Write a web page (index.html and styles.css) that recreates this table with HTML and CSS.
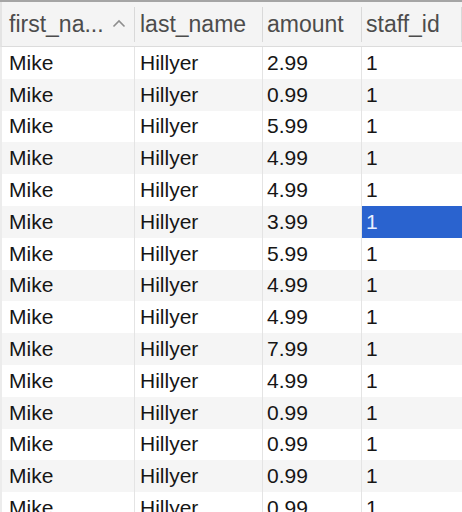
FILE: index.html
```html
<!DOCTYPE html>
<html>
<head>
<meta charset="utf-8">
<link rel="stylesheet" href="styles.css">
</head>
<body>
<div class="grid">
  <div class="topbar"></div>
  <div class="head">
    <div class="hc c1"><span class="htext">first_na...</span>
      <svg class="chev" width="14" height="9" viewBox="0 0 14 9"><path d="M1.5 7.5 L7 2 L12.5 7.5" fill="none" stroke="#8e8e8e" stroke-width="1.6"/></svg>
    </div>
    <div class="hc c2"><span class="htext">last_name</span></div>
    <div class="hc c3"><span class="htext">amount</span></div>
    <div class="hc c4"><span class="htext">staff_id</span></div>
  </div>
  <div class="body">
    <div class="row"><div class="cell c1">Mike</div><div class="cell c2">Hillyer</div><div class="cell c3">2.99</div><div class="cell c4">1</div></div>
    <div class="row alt"><div class="cell c1">Mike</div><div class="cell c2">Hillyer</div><div class="cell c3">0.99</div><div class="cell c4">1</div></div>
    <div class="row"><div class="cell c1">Mike</div><div class="cell c2">Hillyer</div><div class="cell c3">5.99</div><div class="cell c4">1</div></div>
    <div class="row alt"><div class="cell c1">Mike</div><div class="cell c2">Hillyer</div><div class="cell c3">4.99</div><div class="cell c4">1</div></div>
    <div class="row"><div class="cell c1">Mike</div><div class="cell c2">Hillyer</div><div class="cell c3">4.99</div><div class="cell c4">1</div></div>
    <div class="row alt"><div class="cell c1">Mike</div><div class="cell c2">Hillyer</div><div class="cell c3">3.99</div><div class="cell c4 sel">1</div></div>
    <div class="row"><div class="cell c1">Mike</div><div class="cell c2">Hillyer</div><div class="cell c3">5.99</div><div class="cell c4">1</div></div>
    <div class="row alt"><div class="cell c1">Mike</div><div class="cell c2">Hillyer</div><div class="cell c3">4.99</div><div class="cell c4">1</div></div>
    <div class="row"><div class="cell c1">Mike</div><div class="cell c2">Hillyer</div><div class="cell c3">4.99</div><div class="cell c4">1</div></div>
    <div class="row alt"><div class="cell c1">Mike</div><div class="cell c2">Hillyer</div><div class="cell c3">7.99</div><div class="cell c4">1</div></div>
    <div class="row"><div class="cell c1">Mike</div><div class="cell c2">Hillyer</div><div class="cell c3">4.99</div><div class="cell c4">1</div></div>
    <div class="row alt"><div class="cell c1">Mike</div><div class="cell c2">Hillyer</div><div class="cell c3">0.99</div><div class="cell c4">1</div></div>
    <div class="row"><div class="cell c1">Mike</div><div class="cell c2">Hillyer</div><div class="cell c3">0.99</div><div class="cell c4">1</div></div>
    <div class="row alt"><div class="cell c1">Mike</div><div class="cell c2">Hillyer</div><div class="cell c3">0.99</div><div class="cell c4">1</div></div>
    <div class="row"><div class="cell c1">Mike</div><div class="cell c2">Hillyer</div><div class="cell c3">0.99</div><div class="cell c4">1</div></div>
  </div>
</div>
</body>
</html>
```
FILE: styles.css
```css
html, body {
  margin: 0;
  padding: 0;
  background: #ffffff;
  overflow: hidden;
}
.grid {
  width: 462px;
  height: 512px;
  font-family: "Liberation Sans", Arial, sans-serif;
  overflow: hidden;
}
.topbar {
  height: 2px;
  background: #a5a5a5;
}
.head {
  display: grid;
  grid-template-columns: 133px 128px 99px 100px;
  height: 44px;
  background: #f4f4f4;
  border-bottom: 1px solid #dcdcdc;
  border-left: 2px solid #e4e4e4;
}
.hc {
  display: flex;
  align-items: center;
  position: relative;
  font-size: 23px;
  color: #4c4c4c;
}
.hc::after {
  content: "";
  position: absolute;
  right: 0;
  top: 5px;
  bottom: 4px;
  width: 1px;
  background: #d9d9d9;
}
.hc.c1 { padding-left: 7px; }
.hc.c2 { padding-left: 5px; }
.hc.c3 { padding-left: 4px; }
.hc.c4 { padding-left: 4px; }
.htext { white-space: nowrap; }
.chev {
  position: absolute;
  left: 110px;
  top: 17px;
}
.body {
  border-left: 2px solid #ececec;
}
.row {
  display: grid;
  grid-template-columns: 133px 128px 99px 100px;
  height: 31.8px;
  background: #ffffff;
}
.row.alt { background: #f5f5f5; }
.cell {
  display: flex;
  align-items: center;
  font-size: 21px;
  color: #161616;
  border-right: 1px solid #e4e4e4;
  white-space: nowrap;
}
.cell.c1 { padding-left: 7px; }
.cell.c2 { padding-left: 5px; }
.cell.c3 { padding-left: 4px; }
.cell.c4 { padding-left: 4px; border-right: 0; }
.cell.sel {
  background: #2a63cf;
  color: #e8efff;
}
```
